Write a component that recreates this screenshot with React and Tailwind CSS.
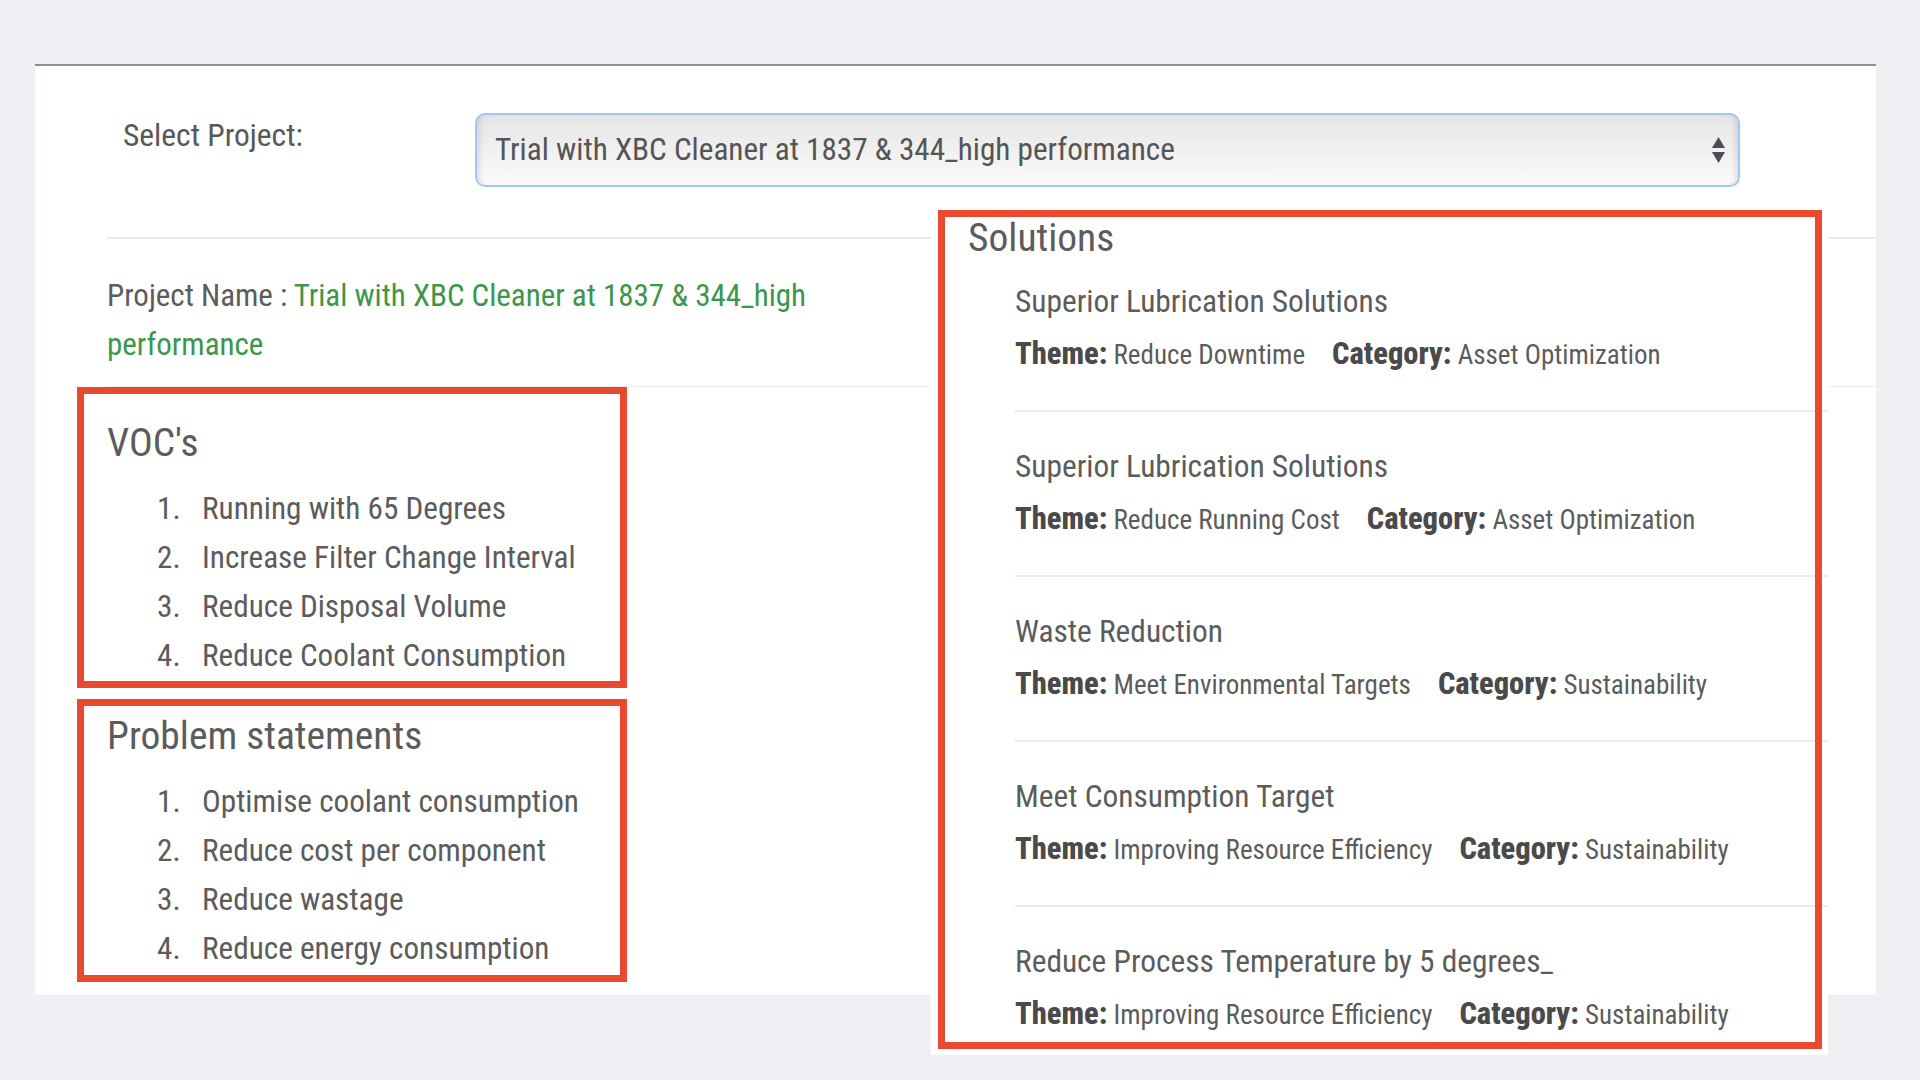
const vocs = [
  "Running with 65 Degrees",
  "Increase Filter Change Interval",
  "Reduce Disposal Volume",
  "Reduce Coolant Consumption",
];

const problems = [
  "Optimise coolant consumption",
  "Reduce cost per component",
  "Reduce wastage",
  "Reduce energy consumption",
];

const solutions = [
  { name: "Superior Lubrication Solutions", theme: "Reduce Downtime", category: "Asset Optimization" },
  { name: "Superior Lubrication Solutions", theme: "Reduce Running Cost", category: "Asset Optimization" },
  { name: "Waste Reduction", theme: "Meet Environmental Targets", category: "Sustainability" },
  { name: "Meet Consumption Target", theme: "Improving Resource Efficiency", category: "Sustainability" },
  { name: "Reduce Process Temperature by 5 degrees_", theme: "Improving Resource Efficiency", category: "Sustainability" },
];

const projectName = "Trial with XBC Cleaner at 1837 & 344_high performance";

const NumberedList = ({ items }) => (
  <ol className="mt-[16px] ml-[50px]">
    {items.map((item, i) => (
      <li key={item} className="flex text-[31.2px] leading-[49px]">
        <span className="w-[45px]">{i + 1}.</span>
        <span>{item}</span>
      </li>
    ))}
  </ol>
);

const SelectArrows = () => (
  <svg width="13" height="26" viewBox="0 0 13 26" className="shrink-0">
    <path d="M6.5 0 L13 11 L0 11 Z" fill="#4a4d52" />
    <path d="M6.5 26 L13 15 L0 15 Z" fill="#4a4d52" />
  </svg>
);

const SolutionItem = ({ name, theme, category, first, last }) => (
  <div
    className={`${first ? "pt-[23px]" : "pt-[35px] border-t-2 border-[#ececec]"} ${last ? "pb-[8px]" : "pb-[36px]"}`}
  >
    <p className="h-[40px] text-[31.4px] leading-[40px]">{name}</p>
    <p className="mt-[12px] h-[40px] text-[27px] leading-[40px] whitespace-nowrap">
      <span className="text-[30.5px] font-extrabold text-[#4a4a4a]">Theme:</span> {theme}
      <span className="ml-[27px] text-[30.5px] font-extrabold text-[#4a4a4a]">Category:</span> {category}
    </p>
  </div>
);

export default function App() {
  return (
    <div className="min-h-screen bg-[#eff0f4] pt-[64px] overflow-hidden font-['Roboto',sans-serif] [font-stretch:75%] text-[#5c5c5c]">
      <div className="relative ml-[35px] mr-[44px] h-[931px] bg-white border-t-2 border-[#8e8e8e]">
        {/* project picker */}
        <div className="flex items-start pt-[47px] pl-[88px]">
          <label className="w-[352px] mt-[3px] text-[31.5px] leading-[40px] text-[#585858]">Select Project:</label>
          <div className="flex items-center justify-between w-[1265px] h-[74px] pl-[18px] pr-[13px] rounded-[10px] border-2 border-[#9ec9f2] bg-gradient-to-b from-[#e5e5e5] to-[#fbfbfb] shadow-[inset_6px_0_6px_-4px_rgba(0,0,0,0.12),inset_-6px_0_6px_-4px_rgba(0,0,0,0.12)]">
            <span className="text-[31.2px] text-[#555]">{projectName}</span>
            <SelectArrows />
          </div>
        </div>

        <div className="mt-[50px] ml-[72px] h-[2px] bg-[#ebebeb]" />

        <p className="mt-[32px] ml-[72px] w-[800px] text-[31px] leading-[49px]">
          Project Name : <span className="text-[#3d964a]">{projectName}</span>
        </p>

        <div className="mt-[17px] ml-[72px] h-[1px] bg-[#ebebeb]" />

        <section className="ml-[42px] w-[550px] h-[301px] border-[7px] border-[#e9492f] pl-[23px] pt-[24px]">
          <h2 className="text-[39.5px] leading-[50px]">VOC's</h2>
          <NumberedList items={vocs} />
        </section>

        <section className="mt-[11px] ml-[42px] w-[550px] h-[283px] border-[7px] border-[#e9492f] pl-[23px] pt-[5px]">
          <h2 className="text-[39.5px] leading-[50px]">Problem statements</h2>
          <NumberedList items={problems} />
        </section>

        {/* solutions panel, laid over the row dividers */}
        <div className="absolute left-[896px] top-[144px] w-[897px] h-[845px] bg-white">
          <h2 className="pl-[37px] pt-[7px] text-[39.5px] leading-[42px]">Solutions</h2>
          <div className="ml-[84px]">
            {solutions.map((s, i) => (
              <SolutionItem key={i} {...s} first={i === 0} last={i === solutions.length - 1} />
            ))}
          </div>
          <div className="absolute left-[7px] right-[6px] top-0 bottom-[6px] border-[7px] border-[#e9492f] pointer-events-none" />
        </div>
      </div>
    </div>
  );
}
